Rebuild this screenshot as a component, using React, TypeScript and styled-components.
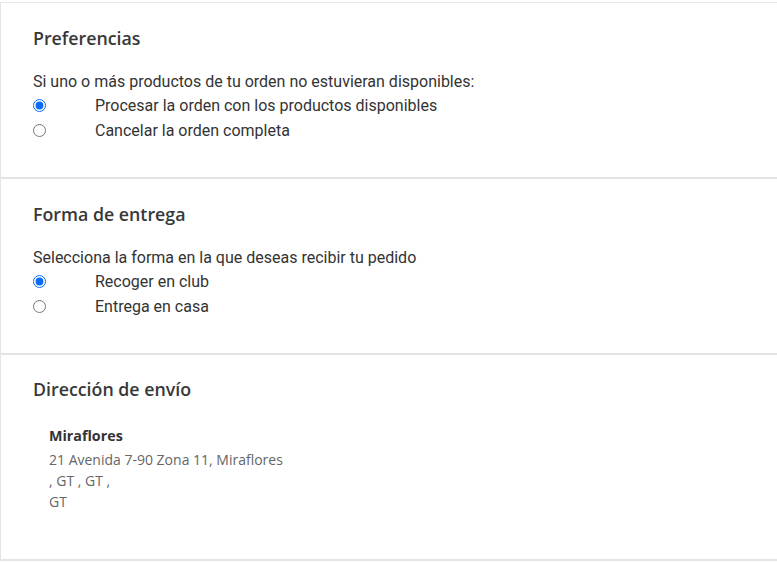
import React from "react";
import styled, { createGlobalStyle } from "styled-components";

const Global = createGlobalStyle`
  html, body { margin: 0; padding: 0; background: #ffffff; }
  body { font-family: Roboto, "Liberation Sans", sans-serif; }
  * { box-sizing: border-box; }
`;

const Page = styled.div`
  display: flex;
  flex-direction: column;
  padding-top: 2px;
  width: 778px;
  overflow: hidden;
`;

const Card = styled.section<{ $top?: number; $bottom: number }>`
  background: #fff;
  border-left: 1px solid #e4e4e6;
  border-bottom: 2px solid #e4e4e6;
  padding: ${(p) => p.$top ?? 23}px 0 ${(p) => p.$bottom}px 32px;
  display: flex;
  flex-direction: column;

  &:first-child {
    border-top: 1px solid #e8e8ea;
  }
`;

const Title = styled.h2<{ $gap?: number }>`
  margin: 0 0 ${(p) => (p.$gap ?? 20)}px 0;
  font-family: "Open Sans", sans-serif;
  font-weight: 600;
  font-size: 17.8px;
  line-height: 24px;
  color: #383838;
`;

const Description = styled.p`
  margin: 0;
  font-family: Roboto, sans-serif;
  font-size: 16px;
  line-height: 23px;
  color: #333333;
`;

const Options = styled.div`
  display: flex;
  flex-direction: column;
`;

const OptionRow = styled.label`
  display: grid;
  grid-template-columns: 62px auto;
  align-items: center;
  height: 25px;
  font-family: Roboto, sans-serif;
  font-size: 16px;
  color: #333333;
`;

const Radio = styled.input`
  margin: 0;
  width: 13px;
  height: 13px;
  accent-color: #0b6cf2;
`;

const Address = styled.div`
  display: flex;
  flex-direction: column;
  padding: 23px 0 0 16px;
  font-family: "Open Sans", sans-serif;
`;

const AddressName = styled.div`
  font-weight: 700;
  font-size: 14.3px;
  line-height: 24px;
  margin-bottom: 1px;
  color: #333333;
`;

const AddressLine = styled.div`
  font-size: 14px;
  line-height: 21px;
  color: #666666;
`;

type Opt = { label: string; checked?: boolean };

const RadioGroup = ({ name, options }: { name: string; options: Opt[] }) => (
  <Options>
    {options.map((o) => (
      <OptionRow key={o.label}>
        <Radio type="radio" name={name} defaultChecked={o.checked} />
        <span>{o.label}</span>
      </OptionRow>
    ))}
  </Options>
);

export default function App() {
  return (
    <>
      <Global />
      <Page>
        <Card $bottom={34}>
          <Title>Preferencias</Title>
          <Description>Si uno o más productos de tu orden no estuvieran disponibles:</Description>
          <RadioGroup
            name="pref"
            options={[
              { label: "Procesar la orden con los productos disponibles", checked: true },
              { label: "Cancelar la orden completa" },
            ]}
          />
        </Card>
        <Card $bottom={34}>
          <Title>Forma de entrega</Title>
          <Description>Selecciona la forma en la que deseas recibir tu pedido</Description>
          <RadioGroup
            name="entrega"
            options={[
              { label: "Recoger en club", checked: true },
              { label: "Entrega en casa" },
            ]}
          />
        </Card>
        <Card $top={22} $bottom={47}>
          <Title $gap={0}>Dirección de envío</Title>
          <Address>
            <AddressName>Miraflores</AddressName>
            <AddressLine>21 Avenida 7-90 Zona 11, Miraflores</AddressLine>
            <AddressLine>, GT , GT ,</AddressLine>
            <AddressLine>GT</AddressLine>
          </Address>
        </Card>
      </Page>
    </>
  );
}
